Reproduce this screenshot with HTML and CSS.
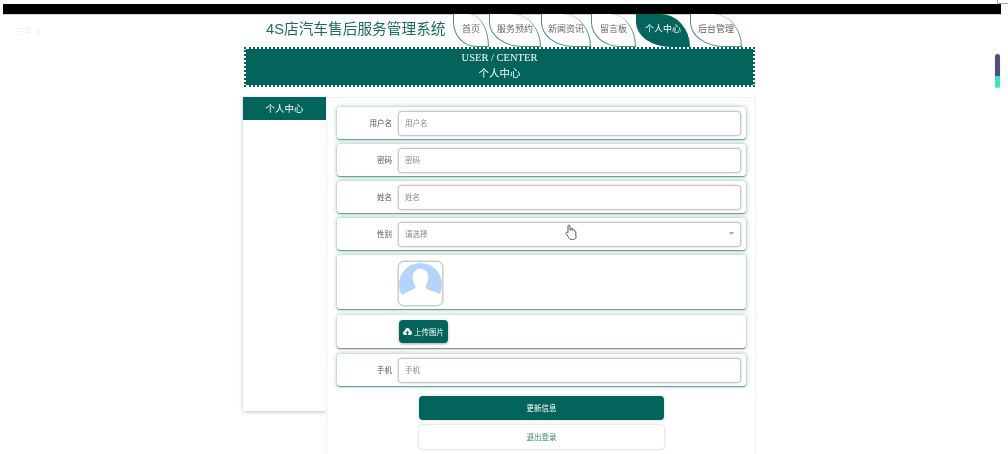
FILE: index.html
```html
<!DOCTYPE html>
<html lang="zh">
<head>
  <meta charset="UTF-8">
  <meta name="viewport" content="width=device-width, initial-scale=1">
  <title>个人中心</title>
  <link rel="stylesheet" href="styles.css">
</head>
<body>

<div class="corner-mark"></div>
<div class="topbar"></div>
<div class="ghost-text">三平 9</div>

<div class="wrap">
  <!-- Header -->
  <div class="header">
    <div class="site-title">4S店汽车售后服务管理系统</div>
    <ul class="tabs">
      <li class="tab t1">首页</li>
      <li class="tab t2">服务预约</li>
      <li class="tab t3">新闻资讯</li>
      <li class="tab t4">留言板</li>
      <li class="tab t5 active">个人中心</li>
      <li class="tab t6">后台管理</li>
    </ul>
  </div>

  <div class="banner">
    <div class="banner-en">USER / CENTER</div>
    <div class="banner-cn">个人中心</div>
  </div>

  <div class="content">
    <!-- Side menu -->
    <div class="side">
      <div class="side-title">个人中心</div>
    </div>

    <!-- Form -->
    <div class="panel">
      <div class="row">
        <label class="row-label">用户名</label>
        <div class="field">用户名</div>
      </div>
      <div class="row">
        <label class="row-label">密码</label>
        <div class="field">密码</div>
      </div>
      <div class="row">
        <label class="row-label">姓名</label>
        <div class="field">姓名</div>
      </div>
      <div class="row">
        <label class="row-label">性别</label>
        <div class="field select">
          <span>请选择</span>
          <svg class="caret" width="5" height="3" viewBox="0 0 7 4"><path d="M0 0h7L3.500 4z" fill="#a8a8a8"/></svg>
        </div>
      </div>
      <div class="row row-photo">
        <div class="row-label"></div>
        <div class="avatar">
          <svg width="44" height="44" viewBox="0 0 44 44">
            <circle cx="22" cy="23" r="22" fill="#b5d4fb"/>
            <path d="M22 7c5 0 8 4 8 9 0 4-2 7-3 9 0 2 2 3 5 4l11 4v11H0V35l12-6c3-1 5-2 5-4-1-2-3-5-3-9 0-5 3-9 8-9z" fill="#fff"/>
          </svg>
        </div>
      </div>
      <div class="row row-upload">
        <div class="row-label"></div>
        <div class="upload-btn">
          <svg width="9" height="7" viewBox="0 0 9 7">
            <path d="M2 7C.8 7 0 6 0 4.900 0 3.800.8 3 1.700 3 2 1.300 3.100 0 4.600 0 6 0 7 1.200 7.300 2.800 8.300 2.900 9 3.800 9 4.900 9 6 8.200 7 7 7z" fill="#fff"/>
            <path d="M4.500 2.800 6.500 5H5.200v2H3.800V5H2.500z" fill="#03645c"/>
          </svg>
          <span>上传图片</span>
        </div>
      </div>
      <div class="row">
        <label class="row-label">手机</label>
        <div class="field">手机</div>
      </div>
      <div class="actions">
        <div class="btn btn-primary">更新信息</div>
        <div class="btn btn-plain">退出登录</div>
      </div>
    </div>
  </div>
</div>

<!-- Hand cursor caught in the capture -->
<svg class="cursor" width="12" height="16" viewBox="0 0 12 16">
  <path d="M3 8V2c0-1.300 2-1.300 2 0v4l1 .1V5c0-1 1.700-1 1.700 0v1.300c.3-.8 1.700-.7 1.700.3v.6c.4-.6 1.400-.4 1.400.5v3.500C11.800 14 10 15.500 7.500 15.500 5 15.500 4 14.500 3 12.500L1 9.500C.5 8.500 2 7.500 3 8.500z" fill="#fff" stroke="#555" stroke-width="1"/>
</svg>

<!-- Scrollbar thumb -->
<div class="scroll-thumb"></div>

</body>
</html>
```

FILE: styles.css
```css
* { box-sizing: border-box; }
html, body {
  height: 100%;
  overflow: hidden;
}
body {
  margin: 0;
  position: relative;
  font-family: "Liberation Sans", "Noto Sans CJK SC", sans-serif;
  background: #fff;
  color: #555;
}

.topbar {
  height: 10px;
  margin: 4px 7px 0 3px;
  background: #000;
  box-shadow: 0 1px 0 #ccc;
}

.corner-mark {
  position: absolute;
  left: 997px;
  top: 0;
  width: 11px;
  height: 4px;
  border-left: 1px solid #aaa;
  border-bottom: 1px solid #aaa;
}

.ghost-text {
  position: absolute;
  left: 15px;
  top: 25px;
  font-size: 9px;
  color: #f1f1f1;
}

.wrap {
  width: 513px;
  margin-left: 243px;
  filter: blur(0.5px);
}

/* header */
.header {
  display: flex;
  height: 33px;
}
.site-title {
  margin-left: 23px;
  width: 187px;
  padding-top: 5px;
  font-size: 14.700px;
  line-height: 20px;
  color: #1e6a63;
  white-space: nowrap;
}
.tabs {
  display: flex;
  list-style: none;
  margin: 0;
  padding: 0;
}
.tab {
  display: flex;
  align-items: center;
  justify-content: center;
  height: 33px;
  padding-bottom: 3px;
  font-size: 9px;
  color: #666;
  border: 1.500px solid #4d8f86;
  border-top: none;
  border-radius: 0 55% 0 65% / 0 100% 0 75%;
  background: #fff;
}
.t1 { width: 36px; }
.t2 { width: 52px; }
.t3 { width: 50px; }
.t4 { width: 45px; }
.t5 { width: 54px; }
.t6 { width: 52px; }
.tab.active {
  background: #03645c;
  border-color: #03645c;
  color: #fff;
}

/* banner */
.banner {
  height: 40px;
  margin: 0 1px;
  border: 2px dotted #03645c;
  background: #03645c;
  background-clip: padding-box;
  text-align: center;
  color: #fff;
  font-family: "Liberation Serif", "Noto Sans CJK SC", serif;
}
.banner-en {
  font-size: 10.500px;
  line-height: 13px;
  margin-top: 2px;
}
.banner-cn {
  font-size: 10.500px;
  line-height: 15px;
  margin-top: 2px;
}

/* body */
.content {
  display: flex;
  align-items: flex-start;
  margin-top: 10px;
}
.side {
  width: 83px;
  height: 314px;
  background: #fff;
  box-shadow: 0 1px 4px rgba(0,0,0,0.25);
}
.side-title {
  height: 23px;
  background: #03645c;
  color: #fff;
  text-align: center;
  font-size: 9.500px;
  line-height: 23px;
}
.panel {
  width: 430px;
  height: 360px;
  padding: 9px 9px 0 10px;
  background: #fff;
  border: 1px solid #f0f0f0;
  border-bottom: none;
}

.row {
  display: flex;
  align-items: center;
  height: 32px;
  margin-bottom: 5px;
  border-radius: 3px;
  background: #fff;
  box-shadow: 0 1px 1px #5f9f95, 0 0 4px rgba(60,140,125,0.6);
}
.row-label {
  width: 55px;
  margin-right: 7px;
  padding-bottom: 1px;
  text-align: right;
  font-size: 7.500px;
  color: #555;
  flex-shrink: 0;
}
.field {
  display: flex;
  align-items: center;
  justify-content: space-between;
  width: 341px;
  height: 23px;
  padding: 0 6px 1px;
  font-size: 7.500px;
  color: #888;
  background: #fff;
  border-radius: 3px;
  box-shadow: 0 0 2px 1px rgba(0,0,0,0.3);
}
.row-photo { height: 54px; margin-bottom: 6px; }
.row-upload { height: 33px; margin-bottom: 6px; box-shadow: 0 1px 1px #888, 0 0 4px rgba(60,140,125,0.5); }

.avatar {
  width: 43px;
  height: 43px;
  margin-top: 2px;
  border-radius: 5px;
  overflow: hidden;
  box-shadow: 0 0 0 1.500px #ccc;
}
.avatar svg { display: block; width: 43px; height: 43px; }

.upload-btn {
  display: flex;
  align-items: center;
  justify-content: center;
  gap: 2px;
  width: 49px;
  height: 23px;
  font-size: 7.500px;
  color: #fff;
  background: #03645c;
  border-radius: 4px;
  box-shadow: 0 1px 3px rgba(0,0,0,0.35);
}

.actions {
  margin: 10px 0 0 82px;
  width: 245px;
}
.btn {
  height: 24px;
  margin-bottom: 5px;
  border-radius: 4px;
  text-align: center;
  font-size: 7.500px;
  line-height: 25px;
}
.btn-primary {
  background: #03645c;
  color: #fff;
  box-shadow: 0 0 3px rgba(3,100,92,0.25);
}
.btn-plain {
  background: #fff;
  color: #3f7f77;
  box-shadow: 0 0 3px rgba(0,0,0,0.25);
}

.cursor {
  position: absolute;
  left: 565px;
  top: 224px;
}

.scroll-thumb {
  position: absolute;
  left: 995px;
  top: 54px;
  width: 5px;
  height: 34px;
  border-radius: 3px;
  background: linear-gradient(#50507a 0 65%, #3fe3bd 65%);
  box-shadow: 0 0 1px #999;
}
```
